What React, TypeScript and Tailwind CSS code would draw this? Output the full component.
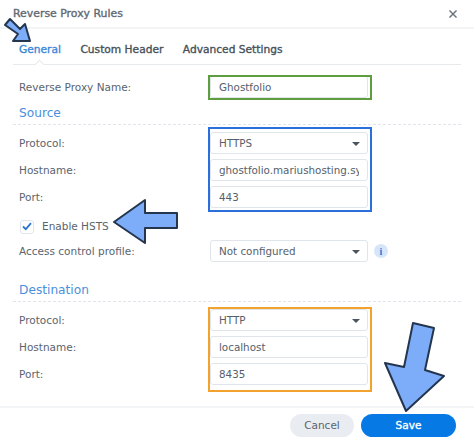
import React from "react";

const semibold = "[-webkit-text-stroke:0.35px_currentColor]";
const fieldBase = "flex h-[22px] w-[158px] items-center rounded-[3px] border border-[#dfe5ea] bg-white px-[8px] pt-[1px] text-[10.35px] text-[#55606b]";

function Row({ label, className = "", children }: { label: string; className?: string; children: React.ReactNode }) {
  return (
    <div className={"flex items-center " + className}>
      <span className="w-[191px] pt-[2px] text-[#5a646e]">{label}</span>
      {children}
    </div>
  );
}

function Field({ value }: { value: string }) {
  return (
    <div className={fieldBase}>
      <span className="w-full overflow-hidden whitespace-nowrap">{value}</span>
    </div>
  );
}

function Select({ value }: { value: string }) {
  return (
    <div className={fieldBase + " justify-between"}>
      <span>{value}</span>
      <span className="mr-[-1px] h-0 w-0 border-x-[4px] border-t-[4px] border-x-transparent border-t-[#4a5560]" />
    </div>
  );
}

function Heading({ children, className = "" }: { children: React.ReactNode; className?: string }) {
  return (
    <div className={"mx-[-6px] border-b border-dashed border-[#dfe5ea] px-[6px] pb-[2px] pt-[1px] text-[12.2px] leading-[17px] text-[#4a90dc] " + className}>
      {children}
    </div>
  );
}

function Arrow({ points }: { points: string }) {
  return (
    <svg className="pointer-events-none absolute left-0 top-0 h-[443px] w-[474px]" viewBox="0 0 474 443">
      <polygon points={points} fill="#7dacf8" stroke="#24364f" strokeWidth="2" strokeLinejoin="round" />
    </svg>
  );
}

export default function App() {
  return (
    <div className="relative flex h-[443px] w-[474px] flex-col overflow-hidden bg-white font-['DejaVu_Sans',sans-serif] text-[10.5px]">
      <header className="flex h-[29px] shrink-0 items-center justify-between border-b-2 border-[#f2f4f6] pl-[13px] pr-[17px] pt-[1px]">
        <span className={"text-[10.9px] text-[#5f6973] " + semibold}>Reverse Proxy Rules</span>
        <svg width="8" height="8" viewBox="0 0 9 9" className="stroke-[#6b747d]" strokeWidth="1.6">
          <path d="M0.5 0.5 L8.5 8.5 M8.5 0.5 L0.5 8.5" />
        </svg>
      </header>

      <nav className={"relative mx-[13px] flex h-[36px] shrink-0 items-center gap-[19.5px] border-b border-[#e6eaed] pl-[6px] pt-[7px] text-[10.65px] text-[#46505a] " + semibold}>
        <span className="text-[#3a87d8]">General</span>
        <span>Custom Header</span>
        <span>Advanced Settings</span>
        <span className="absolute bottom-[-4px] left-[23px] h-[7px] w-[7px] rotate-45 border-l border-t border-[#e6eaed] bg-white" />
      </nav>

      <main className="flex flex-1 flex-col px-[19px] pt-[11px]">
        <Row label="Reverse Proxy Name:">
          <Field value="Ghostfolio" />
        </Row>
        <Heading className="mt-[6px]">Source</Heading>
        <Row label="Protocol:" className="mt-[7px]">
          <Select value="HTTPS" />
        </Row>
        <Row label="Hostname:" className="mt-[5px]">
          <Field value="ghostfolio.mariushosting.synology.me" />
        </Row>
        <Row label="Port:" className="mt-[5px]">
          <Field value="443" />
        </Row>
        <div className="mt-[7px] flex h-[22px] items-center gap-[8px] pt-[1px] text-[#5a646e]">
          <span className="ml-[1px] flex h-[14px] w-[14px] items-center justify-center rounded-[3px] border border-[#dfe5ea] bg-white">
            <svg width="10" height="9" viewBox="0 0 10 9" fill="none" stroke="#2f74d0" strokeWidth="1.8">
              <path d="M1 4.5 L3.8 7.2 L9 1.2" />
            </svg>
          </span>
          <span>Enable HSTS</span>
        </div>
        <Row label="Access control profile:" className="mt-[3px]">
          <Select value="Not configured" />
          <span className="ml-[6px] flex h-[14px] w-[14px] items-center justify-center rounded-full bg-[#d5e6fa] font-['Liberation_Serif',serif] text-[10px] font-bold text-[#2f74d0]">
            i
          </span>
        </Row>
        <Heading className="mt-[19px]">Destination</Heading>
        <Row label="Protocol:" className="mt-[7px]">
          <Select value="HTTP" />
        </Row>
        <Row label="Hostname:" className="mt-[5px]">
          <Field value="localhost" />
        </Row>
        <Row label="Port:" className="mt-[5px]">
          <Field value="8435" />
        </Row>
      </main>

      <footer className="flex h-[37px] shrink-0 items-start justify-end gap-[7px] border-t-2 border-[#f2f4f6] pr-[18px] pt-[6px]">
        <button className="h-[23px] w-[64px] rounded-full bg-[#e9edf2] text-[#5a646e]">Cancel</button>
        <button className={"h-[23px] w-[95px] rounded-full bg-[#0679e4] text-white " + semibold}>Save</button>
      </footer>

      <div className="absolute left-[208px] top-[75px] h-[25px] w-[164px] border-2 border-[#5f9e3f]" />
      <div className="absolute left-[208px] top-[127px] h-[85px] w-[164px] border-2 border-[#2a6fdc]" />
      <div className="absolute left-[208px] top-[307px] h-[85px] w-[164px] border-2 border-[#f3a22e]" />

      <Arrow points="5,25 10,19 20,29 25,24 30,41 13,41 18,34" />
      <Arrow points="114,222 145,200 145,213 177,213 177,228 145,228 145,243" />
      <Arrow points="413,323 434,328 425,370 444,376 406,411 385,363 404,367" />
    </div>
  );
}
